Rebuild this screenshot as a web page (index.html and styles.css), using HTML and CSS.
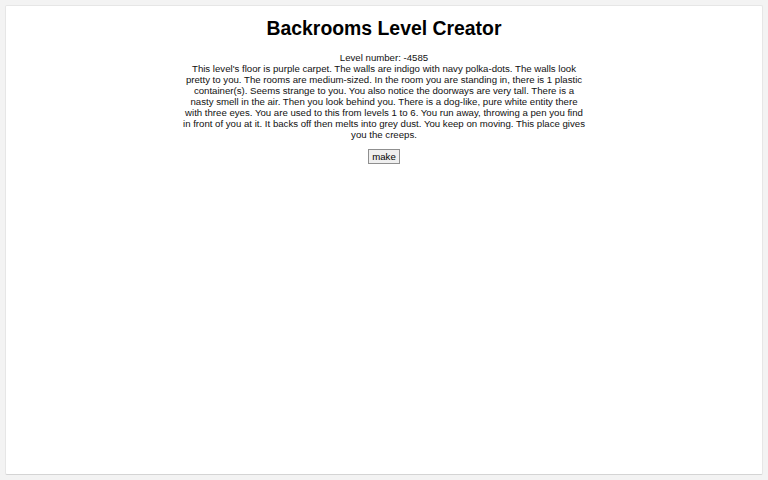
FILE: index.html
```html
<!DOCTYPE html>
<html lang="en">
<head>
<meta charset="utf-8">
<title>Backrooms Level Creator</title>
<link rel="stylesheet" href="styles.css">
</head>
<body>
<main class="card">
  <h1 class="title">Backrooms Level Creator</h1>
  <div class="level">
    <div class="level-number">Level number: -4585</div>
    <p class="level-text">This level's floor is purple carpet. The walls are indigo with navy polka-dots. The walls look pretty to you. The rooms are medium-sized. In the room you are standing in, there is 1 plastic container(s). Seems strange to you. You also notice the doorways are very tall. There is a nasty smell in the air. Then you look behind you. There is a dog-like, pure white entity there with three eyes. You are used to this from levels 1 to 6. You run away, throwing a pen you find in front of you at it. It backs off then melts into grey dust. You keep on moving. This place gives you the creeps.</p>
  </div>
  <button class="make" type="button">make</button>
</main>
</body>
</html>
```

FILE: styles.css
```css
html, body {
  margin: 0;
  height: 100%;
}

body {
  background: #f3f3f3;
  padding: 5px;
  box-sizing: border-box;
  font-family: "Liberation Sans", Arial, sans-serif;
  color: #000;
}

.card {
  background: #fff;
  height: 100%;
  box-sizing: border-box;
  border: 1px solid #e6e6e6;
  border-bottom-color: #d4d4d4;
  border-radius: 2px;
  display: flex;
  flex-direction: column;
  align-items: center;
  padding-top: 11px;
}

.title {
  margin: 0;
  font-size: 19.4px;
  line-height: 23px;
  font-weight: bold;
}

.level {
  margin-top: 12px;
  width: 404px;
  text-align: center;
  font-size: 9.65px;
  line-height: 11px;
  color: #111;
}

.level-text {
  margin: 0;
}

.make {
  margin-top: 9px;
  font-family: "Liberation Sans", Arial, sans-serif;
  font-size: 9.65px;
  line-height: 11px;
  padding: 1px 3px;
  background: #efefef;
  border: 1px solid #8f8f8f;
  border-radius: 0;
  color: #000;
}
```
